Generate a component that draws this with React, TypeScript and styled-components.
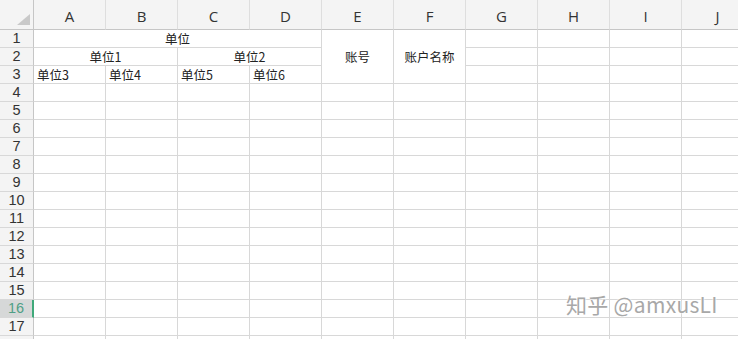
import React from 'react';
import styled, { createGlobalStyle } from 'styled-components';

const COLS = ['A', 'B', 'C', 'D', 'E', 'F', 'G', 'H', 'I', 'J'];
const ROW_COUNT = 18;
const LABELLED_ROWS = 17;
const ACTIVE_ROW = 16;

const GlobalStyle = createGlobalStyle`
  html, body {
    margin: 0;
    padding: 0;
    background: #ffffff;
    overflow: hidden;
  }
  body {
    font-family: 'Noto Sans', 'Noto Sans CJK SC', sans-serif;
  }
`;

const Sheet = styled.div`
  position: relative;
  width: 738px;
  height: 339px;
  overflow: hidden;
`;

const Grid = styled.div`
  display: grid;
  grid-template-columns: 34px repeat(10, 72px);
  grid-template-rows: 30px repeat(${ROW_COUNT}, 18px);
`;

const Corner = styled.div`
  grid-row: 1;
  grid-column: 1;
  background: #f4f4f4;
  border-right: 1px solid #c6c6c6;
  border-bottom: 1px solid #c6c6c6;
  box-sizing: border-box;
  position: relative;

  &::after {
    content: '';
    position: absolute;
    right: 3px;
    bottom: 4px;
    width: 0;
    height: 0;
    border-left: 13px solid transparent;
    border-bottom: 11px solid #c9c9c9;
  }
`;

const ColHead = styled.div<{ $col: number }>`
  grid-row: 1;
  grid-column: ${(p) => p.$col};
  background: #f4f4f4;
  border-right: 1px solid #dedede;
  border-bottom: 1px solid #c6c6c6;
  box-sizing: border-box;
  display: flex;
  align-items: flex-end;
  justify-content: center;
  padding-bottom: 3px;
  font-family: 'Open Sans', 'Noto Sans', sans-serif;
  font-size: 15px;
  line-height: 20px;
  color: #333333;
`;

const RowHead = styled.div<{ $row: number; $active?: boolean }>`
  grid-row: ${(p) => p.$row};
  grid-column: 1;
  background: ${(p) => (p.$active ? '#d6d8d8' : '#f4f4f4')};
  border-right: ${(p) => (p.$active ? '2px solid #3fa97a' : '1px solid #c6c6c6')};
  border-bottom: 1px solid #d8d8d8;
  box-sizing: border-box;
  display: flex;
  align-items: center;
  justify-content: center;
  font-family: 'Liberation Sans', Arial, sans-serif;
  font-size: 14.5px;
  line-height: 17px;
  color: ${(p) => (p.$active ? '#4f9f86' : '#333333')};
`;

const Cell = styled.div<{
  $row: number;
  $col: number;
  $rowSpan?: number;
  $colSpan?: number;
  $align?: 'left' | 'center';
}>`
  grid-row: ${(p) => p.$row} / span ${(p) => p.$rowSpan || 1};
  grid-column: ${(p) => p.$col} / span ${(p) => p.$colSpan || 1};
  border-right: 1px solid #d8d8d8;
  border-bottom: 1px solid #d8d8d8;
  box-sizing: border-box;
  display: flex;
  align-items: center;
  justify-content: ${(p) => (p.$align === 'left' ? 'flex-start' : 'center')};
  padding-left: ${(p) => (p.$align === 'left' ? '3px' : '0')};
  font-family: 'Noto Sans CJK SC', 'Noto Sans', sans-serif;
  font-size: 12.5px;
  line-height: 17px;
  color: #222222;
  white-space: nowrap;
`;

const Watermark = styled.div`
  position: absolute;
  left: 566px;
  top: 291px;
  font-family: 'Noto Sans CJK SC', 'Noto Sans', sans-serif;
  font-size: 21px;
  line-height: 26px;
  color: #a8a8a8;
  letter-spacing: 0.3px;
  text-shadow: 0 0 2px #ffffff, 0 0 2px #ffffff;
`;

interface CellData {
  row: number;
  col: number;
  rowSpan?: number;
  colSpan?: number;
  align?: 'left' | 'center';
  text?: string;
}

// sheet rows start at grid row 2, columns at grid column 2
const merged: CellData[] = [
  { row: 1, col: 1, colSpan: 4, text: '单位' },
  { row: 1, col: 5, rowSpan: 3, text: '账号' },
  { row: 1, col: 6, rowSpan: 3, text: '账户名称' },
  { row: 2, col: 1, colSpan: 2, text: '单位1' },
  { row: 2, col: 3, colSpan: 2, text: '单位2' },
  { row: 3, col: 1, align: 'left', text: '单位3' },
  { row: 3, col: 2, align: 'left', text: '单位4' },
  { row: 3, col: 3, align: 'left', text: '单位5' },
  { row: 3, col: 4, align: 'left', text: '单位6' },
];

function buildCells(): CellData[] {
  const cells = [...merged];
  for (let r = 1; r <= ROW_COUNT; r++) {
    for (let c = 1; c <= COLS.length; c++) {
      if (r <= 3 && c <= 6) continue;
      cells.push({ row: r, col: c });
    }
  }
  return cells;
}

export default function App() {
  const cells = buildCells();
  return (
    <>
      <GlobalStyle />
      <Sheet>
        <Grid>
          <Corner />
          {COLS.map((name, i) => (
            <ColHead key={name} $col={i + 2}>
              {name}
            </ColHead>
          ))}
          {Array.from({ length: ROW_COUNT }, (_, i) => (
            <RowHead key={i} $row={i + 2} $active={i + 1 === ACTIVE_ROW}>
              {i < LABELLED_ROWS ? i + 1 : ''}
            </RowHead>
          ))}
          {cells.map((c) => (
            <Cell
              key={`${c.row}-${c.col}`}
              $row={c.row + 1}
              $col={c.col + 1}
              $rowSpan={c.rowSpan}
              $colSpan={c.colSpan}
              $align={c.align}
            >
              {c.text}
            </Cell>
          ))}
        </Grid>
        <Watermark>知乎 @amxusLI</Watermark>
      </Sheet>
    </>
  );
}
